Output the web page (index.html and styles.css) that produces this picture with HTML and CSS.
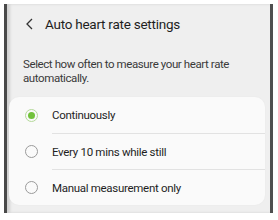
FILE: index.html
```html
<!DOCTYPE html>
<html lang="en">
<head>
  <meta charset="UTF-8">
  <meta name="viewport" content="width=device-width, initial-scale=1.0">
  <title>Auto heart rate settings</title>
  <link rel="stylesheet" href="styles.css">
</head>
<body>
  <div class="phone">
    <!-- Header -->
    <div class="header">
      <svg class="back" width="10" height="12" viewBox="0 0 10 12">
        <path d="M7 1 L2 6 L7 11" fill="none" stroke="#333" stroke-width="1.3"/>
      </svg>
      <h1>Auto heart rate settings</h1>
    </div>

    <p class="desc">Select how often to measure your heart rate automatically.</p>

    <!-- Options -->
    <div class="card">
      <div class="option selected">
        <span class="radio"></span>
        <span class="label">Continuously</span>
      </div>
      <div class="option">
        <span class="radio"></span>
        <span class="label">Every 10 mins while still</span>
      </div>
      <div class="option">
        <span class="radio"></span>
        <span class="label">Manual measurement only</span>
      </div>
    </div>
  </div>
</body>
</html>
```

FILE: styles.css
```css
* {
  margin: 0;
  padding: 0;
  box-sizing: border-box;
}

body {
  font-family: Roboto, "Noto Sans", sans-serif;
  background: #fff;
  color: #222;
  width: 278px;
  height: 220px;
  overflow: hidden;
}

.phone {
  margin: 4px 5px 7px 4px;
  height: 209px;
  border-left: 3px solid #4a4a4a;
  border-right: 3px solid #4f4f4f;
  background: #efefef;
  box-shadow: inset 3px 0 3px rgba(0, 0, 0, 0.12);
  padding: 0 5px 0 2px;
}

.header {
  display: flex;
  align-items: center;
  height: 39px;
  padding-left: 16px;
  padding-top: 1px;
}

.back {
  margin-right: 10px;
}

.header h1 {
  font-size: 13.5px;
  font-weight: 400;
  letter-spacing: -0.25px;
  color: #1e1e1e;
}

.desc {
  font-size: 11.5px;
  line-height: 14px;
  letter-spacing: -0.4px;
  color: #3a3a3a;
  padding: 14px 14px 0 14px;
  height: 54px;
}

.card {
  background: #fafafa;
  border-radius: 10px;
  box-shadow: 0 0 2px rgba(0, 0, 0, 0.04);
}

.option {
  display: flex;
  align-items: center;
  height: 36px;
}

.option + .option .label {
  border-top: 1px solid #e2e2e2;
}

.radio {
  width: 13px;
  height: 13px;
  margin: 0 14px 0 16px;
  border: 1.3px solid #9a9a9a;
  border-radius: 50%;
  flex-shrink: 0;
  display: flex;
  align-items: center;
  justify-content: center;
}

.option.selected .radio {
  border-color: #b5d99a;
}

.option.selected .radio::before {
  content: '';
  width: 7px;
  height: 7px;
  border-radius: 50%;
  background: #72c23b;
}

.label {
  flex: 1;
  align-self: stretch;
  display: flex;
  align-items: center;
  font-size: 11.5px;
  letter-spacing: -0.3px;
  color: #1e1e1e;
}
```
